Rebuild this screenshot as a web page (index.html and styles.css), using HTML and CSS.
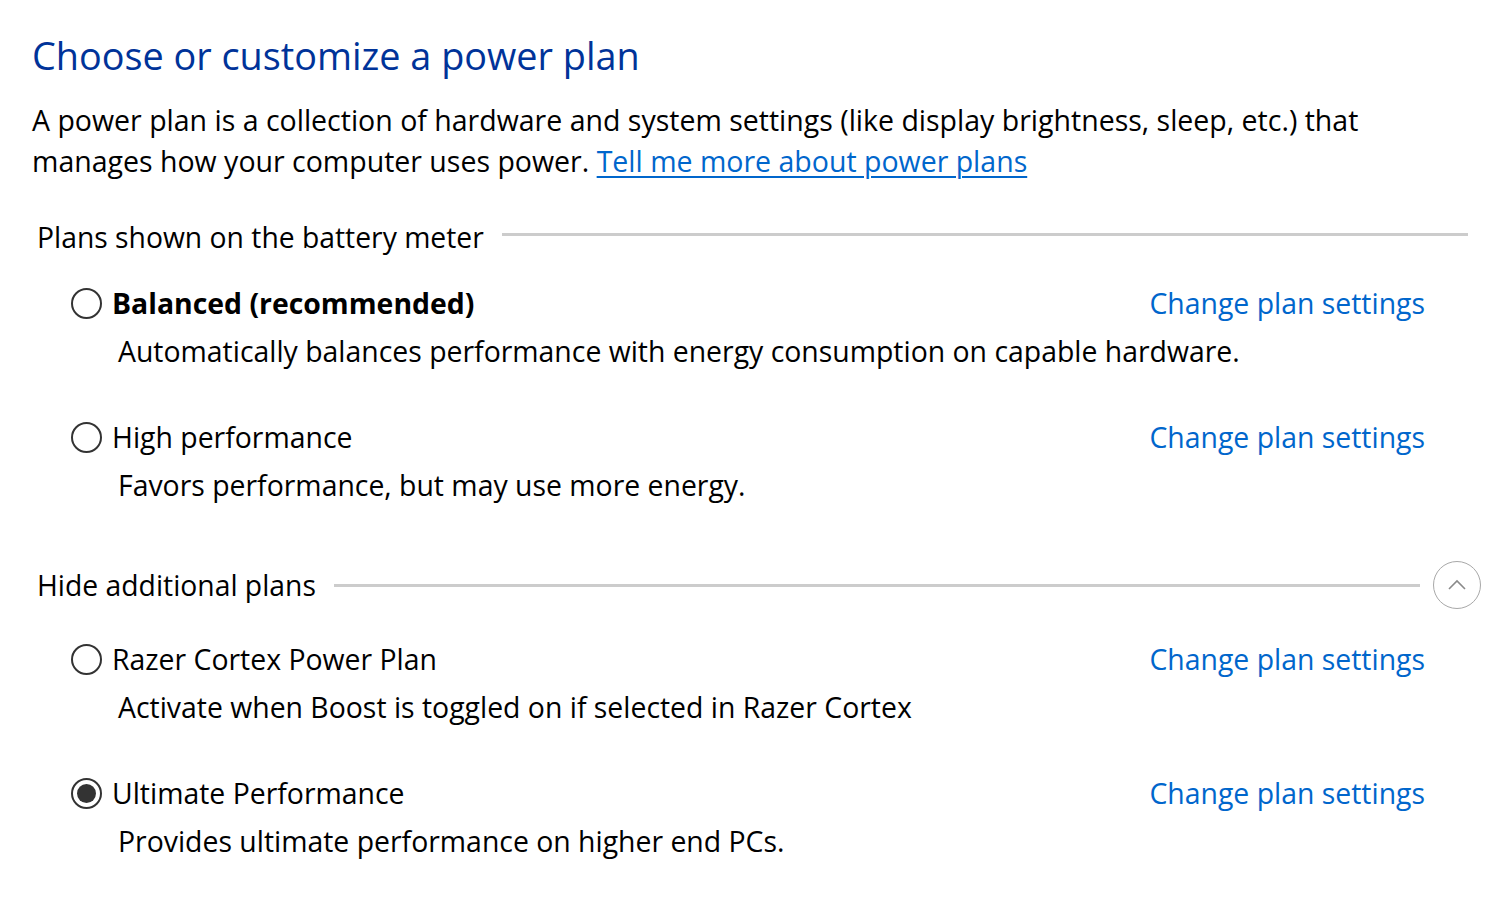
FILE: index.html
```html
<!DOCTYPE html>
<html lang="en">
<head>
<meta charset="utf-8">
<title>Power Options</title>
<link rel="stylesheet" href="styles.css">
</head>
<body>
<main class="page">
  <h1 class="title">Choose or customize a power plan</h1>
  <p class="intro">A power plan is a collection of hardware and system settings (like display brightness, sleep, etc.) that<br>
    manages how your computer uses power. <a class="link" href="#">Tell me more about power plans</a></p>

  <div class="section-head first">
    <span class="section-label">Plans shown on the battery meter</span>
    <span class="rule"></span>
  </div>

  <div class="plan">
    <div class="plan-row">
      <span class="radio"></span>
      <span class="plan-name bold">Balanced (recommended)</span>
      <a class="change" href="#">Change plan settings</a>
    </div>
    <p class="plan-desc">Automatically balances performance with energy consumption on capable hardware.</p>
  </div>

  <div class="plan">
    <div class="plan-row">
      <span class="radio"></span>
      <span class="plan-name">High performance</span>
      <a class="change" href="#">Change plan settings</a>
    </div>
    <p class="plan-desc">Favors performance, but may use more energy.</p>
  </div>

  <div class="section-head second">
    <span class="section-label">Hide additional plans</span>
    <span class="rule"></span>
    <button class="collapse" type="button" aria-label="Hide additional plans">
      <svg width="20" height="12" viewBox="0 0 20 12"><path d="M2 10 L10 2 L18 10" fill="none" stroke="#8a8a8a" stroke-width="1.6"/></svg>
    </button>
  </div>

  <div class="plan">
    <div class="plan-row">
      <span class="radio"></span>
      <span class="plan-name">Razer Cortex Power Plan</span>
      <a class="change" href="#">Change plan settings</a>
    </div>
    <p class="plan-desc">Activate when Boost is toggled on if selected in Razer Cortex</p>
  </div>

  <div class="plan">
    <div class="plan-row">
      <span class="radio checked"></span>
      <span class="plan-name">Ultimate Performance</span>
      <a class="change" href="#">Change plan settings</a>
    </div>
    <p class="plan-desc">Provides ultimate performance on higher end PCs.</p>
  </div>
</main>
</body>
</html>
```

FILE: styles.css
```css
* { box-sizing: border-box; }
html, body { margin: 0; background: #ffffff; }
body {
  font-family: "Open Sans", "Noto Sans", "Liberation Sans", sans-serif;
  color: #000000;
}
.page {
  padding: 28px 34px 0 32px;
  display: flex;
  flex-direction: column;
}
.title {
  margin: 0;
  font-size: 37.8px;
  font-weight: 400;
  line-height: 56px;
  color: #003399;
}
.intro {
  margin: 16px 0 0;
  font-size: 28.5px;
  line-height: 41px;
  white-space: nowrap;
}
.link { color: #0066cc; text-decoration: underline; text-decoration-thickness: 2px; text-underline-offset: 4px; }
.section-head {
  display: flex;
  align-items: center;
  height: 48px;
  padding-left: 5px;
  font-size: 28.3px;
}
.section-head.first { margin-top: 31px; }
.section-head.second { margin-top: 52px; margin-right: -13px; }
.section-label { white-space: nowrap; }
.rule { flex: 1; height: 3px; background: #cccccc; margin-left: 18px; }
.section-head.first .rule { margin-bottom: 5px; }
.section-head.second .rule { margin-right: 13px; }
.collapse {
  width: 48px; height: 48px; border-radius: 50%;
  border: 1px solid #a8a8a8; background: #fff; padding: 0;
  display: flex; align-items: center; justify-content: center;
}
.plan { margin-top: 38px; padding-left: 39px; padding-right: 43px; font-size: 28.4px; }
.section-head.first + .plan { margin-top: 18px; }
.section-head.second + .plan { margin-top: 26px; }
.plan-row { display: flex; align-items: center; height: 48px; }
.radio {
  width: 31px; height: 31px; border-radius: 50%;
  border: 2px solid #333333; margin-right: 10px; flex: none;
  display: flex; align-items: center; justify-content: center;
}
.radio.checked::after { content: ""; width: 19px; height: 19px; border-radius: 50%; background: #333333; }
.plan-name { flex: 1; }
.plan-name.bold { font-weight: 700; }
.change { color: #0066cc; text-decoration: none; }
.plan-desc { margin: 0; padding-left: 47px; line-height: 48px; }
```
